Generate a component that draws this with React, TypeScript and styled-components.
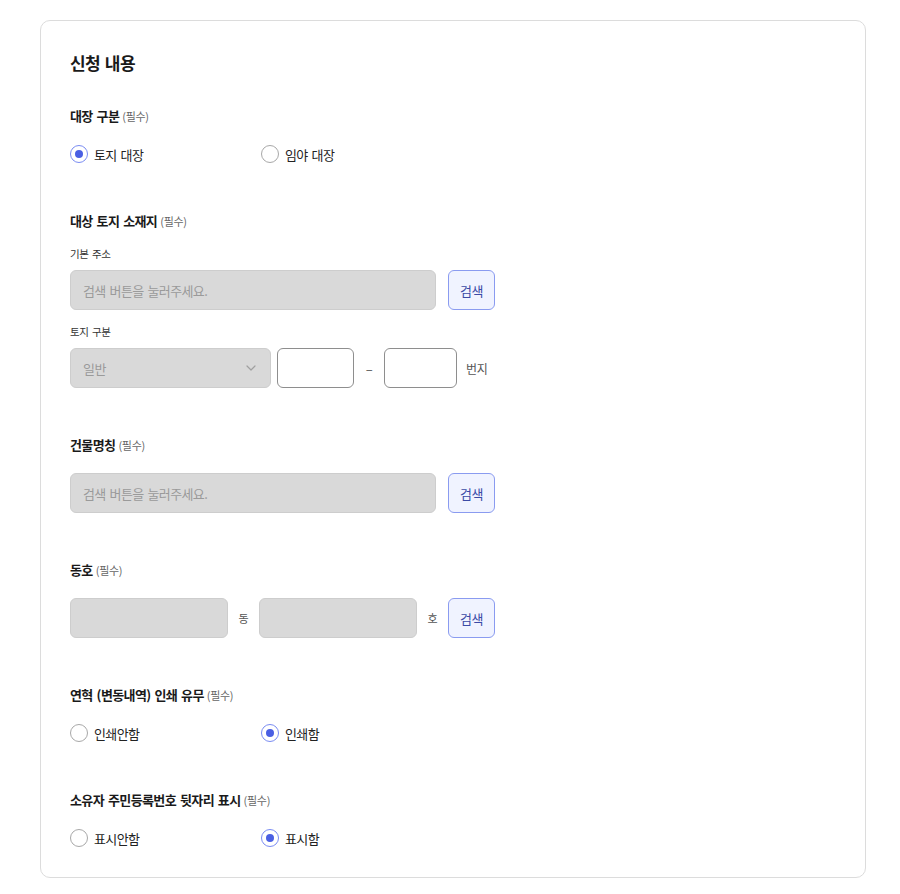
import React, { useState } from "react";
import styled, { createGlobalStyle } from "styled-components";

const GlobalStyle = createGlobalStyle`
  html, body { margin: 0; padding: 0; background: #ffffff; }
  body {
    font-family: "Noto Sans CJK KR", "Noto Sans", sans-serif;
    color: #222222;
    word-spacing: 1.5px;
    -webkit-font-smoothing: antialiased;
  }
  * { box-sizing: border-box; }
`;

const Page = styled.div`
  padding: 20px 0 16px 40px;
`;

const Card = styled.section`
  width: 826px;
  border: 1px solid #dcdcdc;
  border-radius: 10px;
  padding: 29px;
  display: flex;
  flex-direction: column;
`;

const Title = styled.h2`
  margin: 0;
  font-size: 17px;
  line-height: 26px;
  font-weight: 700;
  letter-spacing: -0.6px;
  color: #1a1a1a;
`;

const Section = styled.div<{ $first?: boolean }>`
  display: flex;
  flex-direction: column;
  gap: 18px;
  margin-top: ${(p) => (p.$first ? "30px" : "47px")};
`;

const SectionLabel = styled.div`
  font-size: 13px;
  line-height: 20px;
  font-weight: 700;
  letter-spacing: -0.6px;
  color: #1a1a1a;
`;

const Required = styled.span`
  font-size: 11px;
  font-weight: 400;
  color: #666666;
  letter-spacing: -0.3px;
  margin-left: 3px;
`;

const FieldStack = styled.div`
  display: flex;
  flex-direction: column;
  gap: 14px;
  margin-top: -3px;
`;

const Field = styled.div`
  display: flex;
  flex-direction: column;
  gap: 8px;
`;

const SubLabel = styled.div`
  font-size: 10.5px;
  line-height: 16px;
  letter-spacing: -0.4px;
  color: #333333;
`;

const Row = styled.div`
  display: flex;
  align-items: center;
`;

const TextBox = styled.input<{ $w: number; $disabled?: boolean; $ml?: number }>`
  width: ${(p) => p.$w}px;
  height: 40px;
  margin: 0 0 0 ${(p) => p.$ml ?? 0}px;
  border-radius: 6px;
  border: 1px solid ${(p) => (p.$disabled ? "#cdcdcd" : "#8e8e8e")};
  background: ${(p) => (p.$disabled ? "#d9d9d9" : "#ffffff")};
  padding: 0 12px;
  font-family: inherit;
  font-size: 13px;
  letter-spacing: -0.6px;
  word-spacing: 1.5px;
  color: #222222;
  outline: none;
  &::placeholder { color: #9a9a9a; }
`;

const SelectBox = styled.div<{ $w: number }>`
  width: ${(p) => p.$w}px;
  height: 40px;
  border-radius: 6px;
  border: 1px solid #cdcdcd;
  background: #d9d9d9;
  padding: 0 14px 0 12px;
  display: flex;
  align-items: center;
  justify-content: space-between;
  font-size: 13px;
  letter-spacing: -0.5px;
  color: #9a9a9a;
`;

const SearchButton = styled.button<{ $ml?: number }>`
  width: 47px;
  height: 40px;
  margin-left: ${(p) => p.$ml ?? 0}px;
  border-radius: 6px;
  border: 1px solid #8a9bf0;
  background: #f0f3ff;
  color: #3b4ba6;
  font-family: inherit;
  font-size: 13px;
  letter-spacing: -0.5px;
  padding: 0;
  cursor: pointer;
`;

const Unit = styled.span<{ $w: number; $size?: number; $align?: string; $pl?: number }>`
  width: ${(p) => p.$w}px;
  padding-left: ${(p) => p.$pl ?? 0}px;
  text-align: ${(p) => p.$align ?? "center"};
  font-size: ${(p) => p.$size ?? 11}px;
  letter-spacing: -0.3px;
  color: #555555;
`;

const RadioGroup = styled.div`
  display: grid;
  grid-template-columns: 191px auto;
  align-items: center;
`;

const RadioItem = styled.label`
  display: flex;
  align-items: center;
  height: 20px;
  cursor: pointer;
  font-size: 13px;
  letter-spacing: -0.6px;
  color: #222222;
`;

const HiddenInput = styled.input`
  position: absolute;
  opacity: 0;
  width: 0;
  height: 0;
  margin: 0;
`;

const Circle = styled.span<{ $on: boolean }>`
  width: 18px;
  height: 18px;
  border-radius: 50%;
  border: 1px solid ${(p) => (p.$on ? "#7a8cf2" : "#a8a8a8")};
  background: #ffffff;
  display: flex;
  align-items: center;
  justify-content: center;
  margin-right: 6px;
  flex-shrink: 0;
  &::after {
    content: "";
    width: 8px;
    height: 8px;
    border-radius: 50%;
    background: ${(p) => (p.$on ? "#4a5fe3" : "transparent")};
  }
`;

function Radios({ name, options, initial }: { name: string; options: string[]; initial: number }) {
  const [sel, setSel] = useState(initial);
  return (
    <RadioGroup>
      {options.map((o, i) => (
        <RadioItem key={o}>
          <HiddenInput type="radio" name={name} checked={sel === i} onChange={() => setSel(i)} />
          <Circle $on={sel === i} />
          {o}
        </RadioItem>
      ))}
    </RadioGroup>
  );
}

const Chevron = () => (
  <svg width="10" height="6" viewBox="0 0 10 6" fill="none">
    <path d="M1 1l4 4 4-4" stroke="#a0a0a0" strokeWidth="1.2" strokeLinecap="round" strokeLinejoin="round" />
  </svg>
);

export default function App() {
  return (
    <>
      <GlobalStyle />
      <Page>
        <Card>
          <Title>신청 내용</Title>

          <Section $first>
            <SectionLabel>
              대장 구분<Required>(필수)</Required>
            </SectionLabel>
            <Radios name="ledger" options={["토지 대장", "임야 대장"]} initial={0} />
          </Section>

          <Section>
            <SectionLabel>
              대상 토지 소재지<Required>(필수)</Required>
            </SectionLabel>
            <FieldStack>
              <Field>
                <SubLabel>기본 주소</SubLabel>
                <Row>
                  <TextBox $w={366} $disabled readOnly placeholder="검색 버튼을 눌러주세요." />
                  <SearchButton $ml={12}>검색</SearchButton>
                </Row>
              </Field>
              <Field>
                <SubLabel>토지 구분</SubLabel>
                <Row>
                  <SelectBox $w={201}>
                    일반
                    <Chevron />
                  </SelectBox>
                  <TextBox $w={77} $ml={6} />
                  <Unit $w={30} $size={13}>–</Unit>
                  <TextBox $w={73} />
                  <Unit $w={40} $size={12} $align="left" $pl={9}>번지</Unit>
                </Row>
              </Field>
            </FieldStack>
          </Section>

          <Section>
            <SectionLabel>
              건물명칭<Required>(필수)</Required>
            </SectionLabel>
            <Row>
              <TextBox $w={366} $disabled readOnly placeholder="검색 버튼을 눌러주세요." />
              <SearchButton $ml={12}>검색</SearchButton>
            </Row>
          </Section>

          <Section>
            <SectionLabel>
              동호<Required>(필수)</Required>
            </SectionLabel>
            <Row>
              <TextBox $w={158} $disabled readOnly />
              <Unit $w={31}>동</Unit>
              <TextBox $w={158} $disabled readOnly />
              <Unit $w={31}>호</Unit>
              <SearchButton>검색</SearchButton>
            </Row>
          </Section>

          <Section>
            <SectionLabel>
              연혁 (변동내역) 인쇄 유무<Required>(필수)</Required>
            </SectionLabel>
            <Radios name="history" options={["인쇄안함", "인쇄함"]} initial={1} />
          </Section>

          <Section>
            <SectionLabel>
              소유자 주민등록번호 뒷자리 표시<Required>(필수)</Required>
            </SectionLabel>
            <Radios name="owner" options={["표시안함", "표시함"]} initial={1} />
          </Section>
        </Card>
      </Page>
    </>
  );
}
